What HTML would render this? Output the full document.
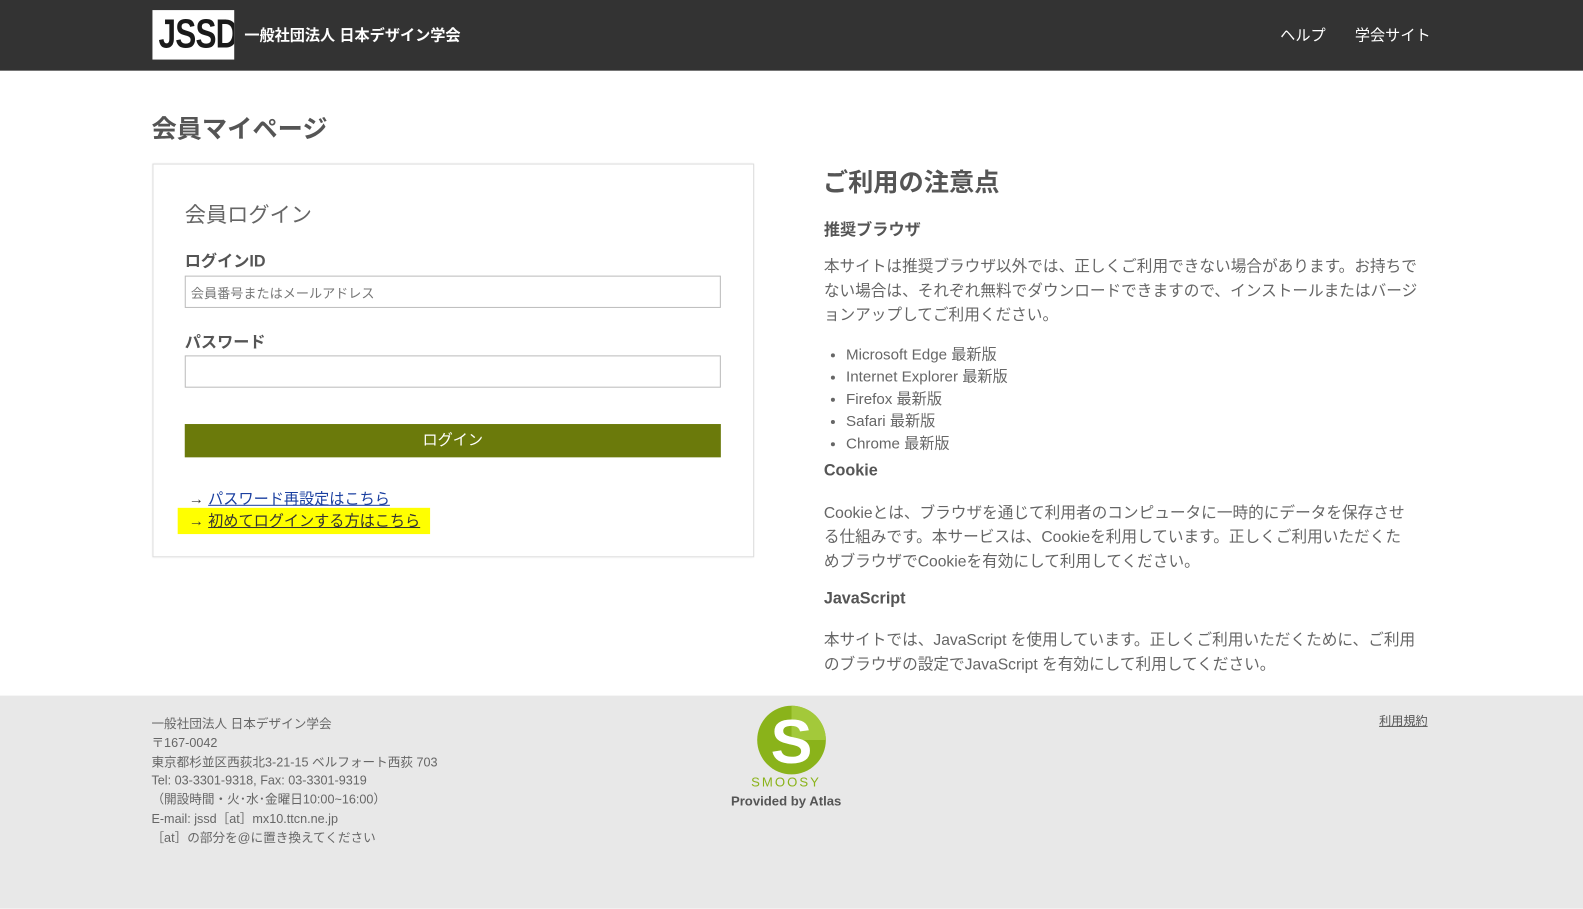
<!DOCTYPE html>
<html><head><meta charset="utf-8"><style>
*{box-sizing:border-box;margin:0;padding:0}
body{width:1583px;height:900px;overflow:hidden;background:#fff;font-family:"Liberation Sans","Noto Sans CJK JP",sans-serif;color:#555;position:relative}
#w{position:absolute;left:0;top:0;width:1568px;height:892px;transform:scale(1.0096);transform-origin:0 0}
.hdr{position:absolute;left:0;top:0;width:1568px;height:70px;background:#333}
.logo{position:absolute;left:151px;top:10px;width:81px;height:49px;background:#fff;overflow:hidden}
.logo span{position:absolute;left:6px;top:0;color:#1a1a1a;font:bold 40px "Liberation Sans",sans-serif;letter-spacing:-1px;line-height:49px;transform:scaleX(.78);transform-origin:left}
.abs{position:absolute;white-space:nowrap}
.box{position:absolute;left:151px;top:162px;width:596px;height:390px;border:1px solid #ddd;box-shadow:0 0 2px #eee}
.inp{position:absolute;left:183px;width:531px;height:32px;border:1px solid #bbb;background:#fff}
.foot{position:absolute;left:0;top:689px;width:1568px;height:211px;background:#e8e8e8}
.r{font-size:15.5px;line-height:24px;color:#666}
a{color:#1a3fa0}
</style></head><body><div id="w">
<div class="hdr">
<div class="logo"><span>JSSD</span></div>
<div class="abs" style="left:242px;top:24px;color:#fff;font-weight:bold;font-size:15px">一般社団法人 日本デザイン学会</div>
<div class="abs" style="left:1268px;top:24px;color:#fff;font-size:15px">ヘルプ</div>
<div class="abs" style="left:1342px;top:24px;color:#fff;font-size:15px">学会サイト</div>
</div>
<div class="abs" style="left:150px;top:108px;font-size:25px;font-weight:bold;color:#555">会員マイページ</div>
<div class="box"></div>
<div class="abs" style="left:183px;top:197px;font-size:21px;color:#666">会員ログイン</div>
<div class="abs" style="left:183px;top:245px;font-size:16px;font-weight:bold;color:#555">ログインID</div>
<div class="inp" style="top:273px"><span style="position:absolute;left:5px;top:6px;font-size:13px;color:#777">会員番号またはメールアドレス</span></div>
<div class="abs" style="left:183px;top:325px;font-size:16px;font-weight:bold;color:#555">パスワード</div>
<div class="inp" style="top:352px"></div>
<div class="abs" style="left:183px;top:420px;width:531px;height:33px;background:#6b7a0b;color:#fff;text-align:center;line-height:33px;font-size:15px">ログイン</div>
<div class="abs" style="left:187px;top:483px;font-size:15px;color:#333">→ <a href="#">パスワード再設定はこちら</a></div>
<div class="abs" style="left:176px;top:503px;width:250px;height:26px;background:#ff0"></div>
<div class="abs" style="left:187px;top:505px;font-size:15px;color:#333">→ <a href="#" style="color:#333">初めてログインする方はこちら</a></div>
<div class="abs" style="left:815px;top:161px;font-size:25px;font-weight:bold;color:#555">ご利用の注意点</div>
<div class="abs" style="left:816px;top:214px;font-size:16px;font-weight:bold">推奨ブラウザ</div>
<div class="abs r" style="left:816px;top:253px;width:598px;white-space:normal">本サイトは推奨ブラウザ以外では、正しくご利用できない場合があります。お持ちでない場合は、それぞれ無料でダウンロードできますので、インストールまたはバージョンアップしてご利用ください。</div>
<ul class="abs r" style="left:838px;top:341px;font-size:15px;line-height:22px;list-style:disc">
<li>Microsoft Edge 最新版</li><li>Internet Explorer 最新版</li><li>Firefox 最新版</li><li>Safari 最新版</li><li>Chrome 最新版</li></ul>
<div class="abs" style="left:816px;top:458px;font-size:16px;font-weight:bold">Cookie</div>
<div class="abs r" style="left:816px;top:497px;width:586px;white-space:normal">Cookieとは、ブラウザを通じて利用者のコンピュータに一時的にデータを保存させる仕組みです。本サービスは、Cookieを利用しています。正しくご利用いただくためブラウザでCookieを有効にして利用してください。</div>
<div class="abs" style="left:816px;top:585px;font-size:16px;font-weight:bold">JavaScript</div>
<div class="abs r" style="left:816px;top:623px;width:596px;white-space:normal">本サイトでは、JavaScript を使用しています。正しくご利用いただくために、ご利用のブラウザの設定でJavaScript を有効にして利用してください。</div>
<div class="foot"></div>
<div class="abs" style="left:150px;top:708px;font-size:12.5px;line-height:18.8px;color:#666">一般社団法人 日本デザイン学会<br>〒167-0042<br>東京都杉並区西荻北3-21-15 ベルフォート西荻 703<br>Tel: 03-3301-9318, Fax: 03-3301-9319<br>（開設時間・火･水･金曜日10:00~16:00）<br>E-mail: jssd［at］mx10.ttcn.ne.jp<br>［at］の部分を@に置き換えてください</div>
<svg class="abs" style="left:749px;top:698px" width="70" height="70"><circle cx="35" cy="35" r="34" fill="#8ab31a"/><path d="M35 1 A34 34 0 0 1 69 35 L35 35Z" fill="#a3c93a"/><text x="35" y="58" text-anchor="middle" font-family="Liberation Sans" font-weight="bold" font-size="62" fill="#fff">S</text></svg>
<div class="abs" style="left:744px;top:767px;font-size:13px;letter-spacing:2px;color:#8ab31a">SMOOSY</div>
<div class="abs" style="left:724px;top:786px;font-size:13px;font-weight:bold;color:#555">Provided by Atlas</div>
<div class="abs" style="left:1366px;top:705px;font-size:12px;color:#555;text-decoration:underline">利用規約</div>
</div></body></html>
